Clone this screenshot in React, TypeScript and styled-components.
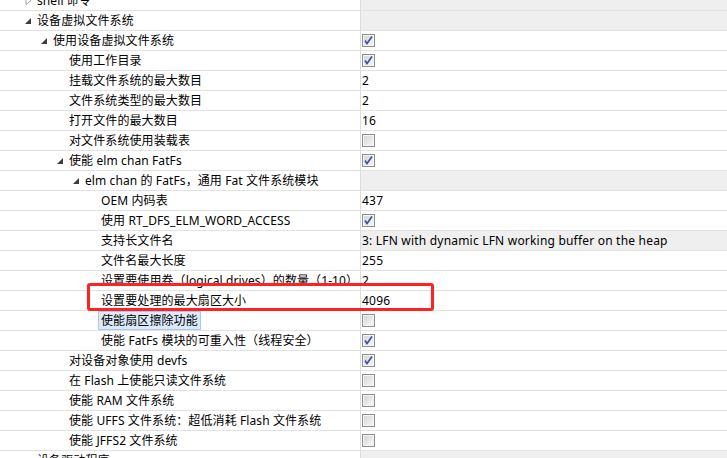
import styled, { createGlobalStyle } from "styled-components";

const GlobalStyle = createGlobalStyle`
  html, body {
    margin: 0;
    padding: 0;
    background: #ffffff;
    overflow: hidden;
  }
  body {
    font-family: "Noto Sans", "Noto Sans CJK SC", sans-serif;
    font-size: 12px;
    color: #000000;
  }
`;

const Page = styled.div`
  position: relative;
  width: 727px;
  height: 458px;
  overflow: hidden;
`;

const Tree = styled.div`
  display: flex;
  flex-direction: column;
  margin-top: -9px;
`;

const Row = styled.div`
  display: grid;
  grid-template-columns: 360px 1fr;
  height: 20px;
  box-sizing: border-box;
  border-bottom: 1px solid #e2e2e2;
`;

const NameCell = styled.div<{ $level: number }>`
  display: flex;
  align-items: center;
  padding-left: ${(p) => 37 + p.$level * 16}px;
  white-space: nowrap;
  overflow: hidden;
`;

const Expander = styled.span`
  display: inline-flex;
  width: 12px;
  margin-left: -12px;
  align-items: center;
`;

const Label = styled.span<{ $selected?: boolean }>`
  line-height: 17px;
  padding: 0 2px;
  margin-left: -3px;
  border: 1px solid ${(p) => (p.$selected ? "#a8c8ee" : "transparent")};
  background: ${(p) => (p.$selected ? "#dce9f9" : "transparent")};
  letter-spacing: 0.1px;
`;

const ValueCell = styled.div<{ $grey?: boolean }>`
  display: flex;
  align-items: center;
  border-left: 1px solid #dcdcdc;
  padding-left: 1px;
  background: ${(p) => (p.$grey ? "#efefef" : "#ffffff")};
  white-space: nowrap;
  overflow: hidden;
  letter-spacing: 0.2px;
`;

const Highlight = styled.div`
  position: absolute;
  left: 87px;
  top: 283px;
  width: 347px;
  height: 28px;
  box-sizing: border-box;
  border: 3px solid #ff2222;
  border-radius: 3px;
  pointer-events: none;
`;

type Value =
  | { kind: "none" }
  | { kind: "check"; on: boolean }
  | { kind: "text"; text: string; grey?: boolean };

type Item = {
  label: string;
  level: number;
  expander?: "open" | "closed";
  value: Value;
  selected?: boolean;
};

const none: Value = { kind: "none" };
const on: Value = { kind: "check", on: true };
const off: Value = { kind: "check", on: false };
const txt = (text: string, grey?: boolean): Value => ({ kind: "text", text, grey });

const items: Item[] = [
  { label: "shell 命令", level: 1, expander: "closed", value: none },
  { label: "设备虚拟文件系统", level: 1, expander: "open", value: none },
  { label: "使用设备虚拟文件系统", level: 2, expander: "open", value: on },
  { label: "使用工作目录", level: 3, value: on },
  { label: "挂载文件系统的最大数目", level: 3, value: txt("2") },
  { label: "文件系统类型的最大数目", level: 3, value: txt("2") },
  { label: "打开文件的最大数目", level: 3, value: txt("16") },
  { label: "对文件系统使用装载表", level: 3, value: off },
  { label: "使能 elm chan FatFs", level: 3, expander: "open", value: on },
  { label: "elm chan 的 FatFs，通用 Fat 文件系统模块", level: 4, expander: "open", value: none },
  { label: "OEM 内码表", level: 5, value: txt("437") },
  { label: "使用 RT_DFS_ELM_WORD_ACCESS", level: 5, value: on },
  { label: "支持长文件名", level: 5, value: txt("3: LFN with dynamic LFN working buffer on the heap", true) },
  { label: "文件名最大长度", level: 5, value: txt("255") },
  { label: "设置要使用卷（logical drives）的数量（1-10）", level: 5, value: txt("2") },
  { label: "设置要处理的最大扇区大小", level: 5, value: txt("4096") },
  { label: "使能扇区擦除功能", level: 5, value: off, selected: true },
  { label: "使能 FatFs 模块的可重入性（线程安全）", level: 5, value: on },
  { label: "对设备对象使用 devfs", level: 3, value: on },
  { label: "在 Flash 上使能只读文件系统", level: 3, value: off },
  { label: "使能 RAM 文件系统", level: 3, value: off },
  { label: "使能 UFFS 文件系统：超低消耗 Flash 文件系统", level: 3, value: off },
  { label: "使能 JFFS2 文件系统", level: 3, value: off },
  { label: "设备驱动程序", level: 1, expander: "open", value: none },
];

function Arrow({ open }: { open: boolean }) {
  if (open)
    return (
      <svg width="6" height="6" viewBox="0 0 6 6">
        <path d="M6 0 L6 6 L0 6 Z" fill="#3c3c3c" />
      </svg>
    );
  return (
    <svg width="7" height="9" viewBox="0 0 7 9">
      <path d="M1 0.5 L6 4.5 L1 8.5 Z" fill="none" stroke="#a0a0a0" />
    </svg>
  );
}

function CheckBox({ checked }: { checked: boolean }) {
  return (
    <svg width="13" height="13" viewBox="0 0 13 13">
      <defs>
        <linearGradient id="cbg" x1="0" y1="0" x2="1" y2="1">
          <stop offset="0" stopColor="#d6d6d6" />
          <stop offset="1" stopColor="#f6f6f6" />
        </linearGradient>
      </defs>
      <rect x="0.5" y="0.5" width="12" height="12" fill="#f4f4f4" stroke="#8e8e8e" />
      <rect x="2" y="2" width="9" height="9" fill="url(#cbg)" />
      {checked && (
        <path
          d="M3 6.5 L5 9.5 L10 2.5"
          fill="none"
          stroke="#3b4f9a"
          strokeWidth="1.6"
        />
      )}
    </svg>
  );
}

function ValueView({ value }: { value: Value }) {
  if (value.kind === "none") return <ValueCell $grey />;
  if (value.kind === "check")
    return (
      <ValueCell>
        <CheckBox checked={value.on} />
      </ValueCell>
    );
  return <ValueCell $grey={value.grey}>{value.text}</ValueCell>;
}

export default function App() {
  return (
    <Page>
      <GlobalStyle />
      <Tree>
        {items.map((item, i) => (
          <Row key={i}>
            <NameCell $level={item.level - 1}>
              {item.expander && (
                <Expander>
                  <Arrow open={item.expander === "open"} />
                </Expander>
              )}
              <Label $selected={item.selected}>{item.label}</Label>
            </NameCell>
            <ValueView value={item.value} />
          </Row>
        ))}
      </Tree>
      <Highlight />
    </Page>
  );
}
